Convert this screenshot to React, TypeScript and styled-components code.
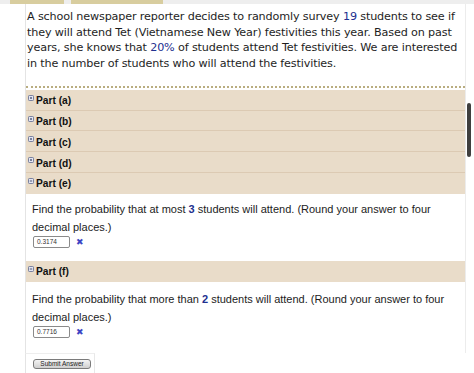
import React from "react";
import styled, { createGlobalStyle } from "styled-components";

const GlobalStyle = createGlobalStyle`
  html, body {
    margin: 0;
    padding: 0;
    background: #ffffff;
  }
  body {
    width: 474px;
    height: 373px;
    overflow: hidden;
  }
`;

const Page = styled.div`
  position: relative;
  width: 474px;
  height: 373px;
  background: #ffffff;
  overflow: hidden;
`;

const TopStrip = styled.div`
  display: flex;
  gap: 7px;
  height: 4px;
  padding-left: 10px;
  background: #eeeeee;
`;

const TopTab = styled.div<{ $w: number }>`
  width: ${({ $w }) => $w}px;
  height: 4px;
  background: #d8cd9f;
`;

const Panel = styled.div`
  margin-left: 25px;
  width: 439px;
  border-left: 1px solid #e4e4e4;
  border-right: 1px solid #ececec;
  background: #ffffff;
`;

const Intro = styled.p`
  margin: 0;
  padding: 5px 4px 14px 1px;
  font-family: "DejaVu Sans", Verdana, sans-serif;
  font-size: 11.2px;
  line-height: 15.7px;
  letter-spacing: -0.15px;
  color: #1e1e1e;
  white-space: nowrap;
`;

const Num = styled.span<{ $bold?: boolean }>`
  color: #22308f;
  font-weight: ${({ $bold }) => ($bold ? 700 : 400)};
`;

const DottedRule = styled.div`
  height: 2px;
  border-top: 2px dotted #b9ad80;
`;

const PartList = styled.div`
  display: flex;
  flex-direction: column;
`;

const PartRow = styled.div<{ $last?: boolean }>`
  display: flex;
  align-items: center;
  height: 20.8px;
  box-sizing: border-box;
  padding-left: 2px;
  background: #e9dcc9;
  border-bottom: 1px solid ${({ $last }) => ($last ? "#e9dcc9" : "#dccab3")};
`;

const PartIcon = styled.svg`
  width: 6px;
  height: 6px;
  margin-right: 2px;
  align-self: flex-start;
  margin-top: 5px;
`;

const PartLabel = styled.span`
  font-family: "Liberation Sans", Arial, sans-serif;
  font-weight: 700;
  font-size: 10.2px;
  color: #111111;
  margin-top: 2px;
`;

const Answer = styled.div<{ $top: number; $bottom: number }>`
  padding: ${({ $top }) => $top}px 10px ${({ $bottom }) => $bottom}px 6px;
`;

const Question = styled.p`
  margin: 0;
  font-family: "Liberation Sans", Arial, sans-serif;
  font-size: 11px;
  line-height: 18px;
  color: #1c1c1c;
  white-space: nowrap;
`;

const InputRow = styled.div`
  display: flex;
  align-items: center;
  gap: 6px;
  height: 12px;
  padding-left: 1px;
`;

const AnswerBox = styled.div`
  width: 37px;
  height: 12px;
  box-sizing: border-box;
  border: 1px solid #8a8a8a;
  border-radius: 2px;
  padding-left: 3px;
  font-family: "Liberation Sans", Arial, sans-serif;
  font-size: 6.5px;
  line-height: 10px;
  color: #333333;
  background: #ffffff;
`;

const WrongMark = styled.span`
  font-family: "DejaVu Sans", sans-serif;
  font-size: 9px;
  font-weight: 700;
  line-height: 10px;
  color: #3c44c4;
`;

const FooterTab = styled.div`
  width: 70px;
  height: 21px;
  margin-left: 25px;
  border-left: 1px solid #e4e4e4;
  border-right: 1px solid #e8e8e8;
  border-top: 1px solid #eeeeee;
  display: flex;
  align-items: center;
  padding-left: 7px;
  box-sizing: border-box;
`;

const SubmitButton = styled.button`
  width: 58px;
  height: 10px;
  padding: 0;
  border: 1px solid #7b7b7b;
  border-radius: 3px;
  background: linear-gradient(#f4f4f4, #cfcfcf);
  font-family: "Liberation Sans", Arial, sans-serif;
  font-size: 6.5px;
  line-height: 8px;
  color: #222222;
  margin-top: 1px;
`;

const Scrollbar = styled.div`
  position: absolute;
  left: 467px;
  top: 103px;
  width: 4px;
  height: 54px;
  border-radius: 2px;
  background: #3f3f3f;
`;

const ToggleIcon: React.FC<{ open: boolean }> = ({ open }) => (
  <PartIcon viewBox="0 0 6 6">
    <rect x="0.5" y="0.5" width="5" height="5" rx="0.8" fill="#e4e6f2" stroke="#6d7696" strokeWidth="0.9" />
    {open ? (
      <line x1="1.8" y1="3" x2="4.2" y2="3" stroke="#3d4668" strokeWidth="0.9" />
    ) : (
      <rect x="2.2" y="2.2" width="1.6" height="1.6" fill="#3d4668" />
    )}
  </PartIcon>
);

const Part: React.FC<{ label: string; open?: boolean; last?: boolean }> = ({ label, open = false, last }) => (
  <PartRow $last={last}>
    <ToggleIcon open={open} />
    <PartLabel>Part ({label})</PartLabel>
  </PartRow>
);

export default function App() {
  return (
    <Page>
      <GlobalStyle />
      <TopStrip>
        <TopTab $w={54} />
        <TopTab $w={92} />
      </TopStrip>
      <Panel>
        <Intro>
          A school newspaper reporter decides to randomly survey <Num>19</Num> students to see if
          <br />
          they will attend Tet (Vietnamese New Year) festivities this year. Based on past
          <br />
          years, she knows that <Num>20%</Num> of students attend Tet festivities. We are interested
          <br />
          in the number of students who will attend the festivities.
        </Intro>
        <DottedRule />
        <PartList>
          <Part label="a" />
          <Part label="b" />
          <Part label="c" />
          <Part label="d" />
          <Part label="e" open last />
        </PartList>
        <Answer $top={6} $bottom={13}>
          <Question>
            Find the probability that at most <Num $bold>3</Num> students will attend. (Round your answer to four
            <br />
            decimal places.)
          </Question>
          <InputRow>
            <AnswerBox>0.3174</AnswerBox>
            <WrongMark>✖</WrongMark>
          </InputRow>
        </Answer>
        <Part label="f" open last />
        <Answer $top={8} $bottom={15}>
          <Question>
            Find the probability that more than <Num $bold>2</Num> students will attend. (Round your answer to four
            <br />
            decimal places.)
          </Question>
          <InputRow>
            <AnswerBox>0.7716</AnswerBox>
            <WrongMark>✖</WrongMark>
          </InputRow>
        </Answer>
      </Panel>
      <FooterTab>
        <SubmitButton>Submit Answer</SubmitButton>
      </FooterTab>
      <Scrollbar />
    </Page>
  );
}
